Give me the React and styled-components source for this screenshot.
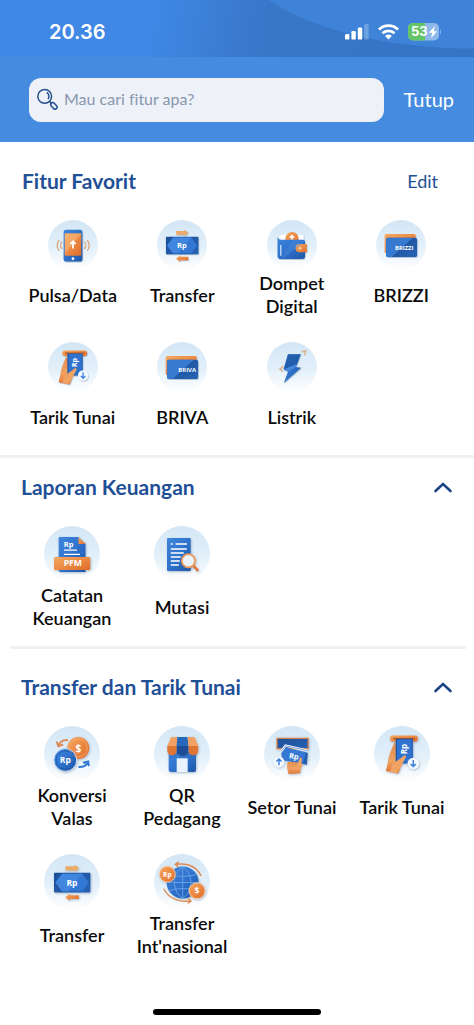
import React, { useState } from 'react';
import styled, { createGlobalStyle } from 'styled-components';

const GlobalStyle = createGlobalStyle`
  * {
    box-sizing: border-box;
  }

  body {
    margin: 0;
    background: #ffffff;
    font-family: 'Lato', 'Liberation Sans', sans-serif;
    font-variant-ligatures: none;
  }

  button {
    border: 0;
    padding: 0;
    background: none;
    font-family: inherit;
    cursor: pointer;
  }
`;

const Page = styled.div`
  display: flex;
  flex-direction: column;
  min-height: 100vh;
`;

const StatusBar = styled.div`
  display: flex;
  align-items: center;
  justify-content: space-between;
  height: 57px;
  padding: 6px 32px 0 49px;
  color: #ffffff;
  background:
    radial-gradient(240px 100px at 100% -51px, #3f83d8 99%, transparent 100%),
    linear-gradient(100deg, #3f88e5 32%, #3876c8 56%, #3574c5 100%);
`;

const Clock = styled.span`
  font-family: 'Inter', sans-serif;
  font-size: 20px;
  font-weight: 600;
  line-height: 24px;
`;

const StatusIcons = styled.div`
  display: flex;
  align-items: center;
  gap: 9px;
`;

const Header = styled.header`
  display: flex;
  align-items: center;
  gap: 20px;
  height: 85px;
  padding: 0 20px 0 29px;
  background: #458ce0;
`;

const SearchBox = styled.label`
  display: flex;
  flex: 1;
  align-items: center;
  gap: 6px;
  min-width: 0;
  height: 44px;
  padding: 0 8px 2px;
  border-radius: 12px;
  background: #eef1f7;
`;

const SearchInput = styled.input`
  flex: 1;
  min-width: 0;
  border: 0;
  padding: 0;
  outline: 0;
  background: transparent;
  color: #1c4587;
  font-family: inherit;
  font-size: 16px;
  font-variant-ligatures: none;
  line-height: 24px;

  &::placeholder {
    color: #8797ae;
    opacity: 1;
  }
`;

const CloseButton = styled.button`
  padding-bottom: 2px;
  color: #ffffff;
  font-size: 20px;
  line-height: 24px;
`;

const Section = styled.section`
  padding: ${(props) => props.$padding};
`;

const SectionHeader = styled.div`
  display: flex;
  align-items: center;
  justify-content: space-between;
  height: 26px;
  padding: 0 4px;
`;

const Title = styled.h2`
  margin: 0;
  color: #1f4f96;
  font-size: 21px;
  font-weight: 700;
  line-height: 26px;
`;

const EditButton = styled.button`
  padding-right: 14px;
  color: #1f4f96;
  font-size: 18px;
  line-height: 24px;
`;

const ToggleButton = styled.button`
  display: flex;
  padding: 4px 0;

  svg {
    transform: ${(props) => (props.$open ? 'none' : 'rotate(180deg)')};
  }
`;

const Grid = styled.div`
  display: grid;
  grid-template-columns: repeat(4, 1fr);
  row-gap: 24px;
  margin-top: 26px;
`;

const Feature = styled.a`
  display: flex;
  flex-direction: column;
  align-items: center;
  gap: 2px;
  color: #0a0a0a;
  text-decoration: none;
`;

const Label = styled.span`
  display: flex;
  align-items: center;
  justify-content: center;
  height: 46px;
  font-size: 18px;
  font-weight: 600;
  line-height: 23px;
  text-align: center;
  white-space: pre-line;
`;

const Divider = styled.hr`
  width: auto;
  height: 3px;
  margin: ${(props) => (props.$inset ? '0 8px 0 10px' : '0')};
  border: 0;
  background: #f1f1f3;
`;

const HomeIndicator = styled.div`
  width: 168px;
  height: 6px;
  margin: auto auto 10px;
  border-radius: 3px;
  background: #000000;
`;

const Defs = () => (
  <svg width="0" height="0" style={{ position: 'absolute' }} aria-hidden="true">
    <defs>
      <linearGradient id="sky" x1="0" y1="0" x2="0" y2="1">
        <stop offset="0" stopColor="#d3e6f5" />
        <stop offset="0.55" stopColor="#e3f0fa" />
        <stop offset="1" stopColor="#ffffff" />
      </linearGradient>
      <linearGradient id="blue" x1="0" y1="0" x2="1" y2="1">
        <stop offset="0" stopColor="#3f86dd" />
        <stop offset="0.5" stopColor="#2f72cc" />
        <stop offset="1" stopColor="#1f56a8" />
      </linearGradient>
      <linearGradient id="navy" x1="0" y1="0" x2="1" y2="1">
        <stop offset="0" stopColor="#1d4f98" />
        <stop offset="1" stopColor="#2762b4" />
      </linearGradient>
      <linearGradient id="orange" x1="0" y1="0" x2="1" y2="1">
        <stop offset="0" stopColor="#f4a862" />
        <stop offset="0.5" stopColor="#ec8a43" />
        <stop offset="1" stopColor="#df6b2c" />
      </linearGradient>
      <linearGradient id="skin" x1="0" y1="0" x2="0" y2="1">
        <stop offset="0" stopColor="#e08a4c" />
        <stop offset="0.6" stopColor="#f0a262" />
        <stop offset="1" stopColor="#dc7435" />
      </linearGradient>
      <filter id="soft" x="-20%" y="-20%" width="150%" height="150%">
        <feDropShadow dx="0.7" dy="0.9" stdDeviation="0.8" floodColor="#36567e" floodOpacity="0.4" />
      </filter>
    </defs>
  </svg>
);

const Mark = ({ x, y, size = 7, children, ...rest }) => (
  <text x={x} y={y} fontSize={size} fontFamily="Open Sans, sans-serif" fontWeight="700" fill="#fff" textAnchor="middle" {...rest}>
    {children}
  </text>
);

const Phone = () => (
  <>
    <g fill="none" stroke="#dba679" strokeWidth="1.5" strokeLinecap="round">
      <path d="M15.5 25a5 5 0 0 0 0 7M12.3 23a8.5 8.5 0 0 0 0 11M41 25a5 5 0 0 1 0 7M44.2 23a8.5 8.5 0 0 1 0 11" />
    </g>
    <g filter="url(#soft)">
      <rect x="17.5" y="11" width="21" height="35.5" rx="2.5" fill="url(#blue)" />
      <path d="M18.8 15h18.4v25H18.8z" fill="url(#orange)" />
    </g>
    <path d="M18.8 15h18.4L18.8 38z" fill="#f7bb80" opacity=".5" />
    <path d="M28 32v-7M25 27l3-3.2 3 3.2" fill="none" stroke="#fff" strokeWidth="2" />
    <circle cx="28" cy="43.3" r="1.5" fill="#fff" />
  </>
);

const Banknote = () => (
  <>
    <g filter="url(#soft)">
      <path d="M21.5 12.2h9.2v-1.4l4.6 3.5-4.6 3.5v-1.4h-9.2z" fill="#edab69" />
      <path d="M35 41.2h-9v-1.5l-4.7 3.5 4.7 3.5v-1.6h9z" fill="url(#orange)" />
      <rect x="10" y="18.7" width="36.4" height="19.7" rx=".8" fill="url(#navy)" />
    </g>
    <path d="M18 19.7h20.5l6.5 8.8-6.5 8.8H18l-6.7-8.8z" fill="#3277d3" />
    <path d="M18 19.7h20.5L24 37.3h-6l-6.7-8.8z" fill="#458ae2" opacity=".75" />
    <Mark x="28" y="31.5" size="8.5">Rp</Mark>
  </>
);

const Wallet = () => (
  <>
    <g filter="url(#soft)">
      <path d="M13 17.5l8-1.5 20 1v8H13z" fill="#fff" />
      <circle cx="28" cy="21" r="7.5" fill="url(#orange)" />
    </g>
    <path d="M28 23v-5M25.5 19.8l2.5-2.4 2.5 2.4" fill="none" stroke="#fff" strokeWidth="1.7" />
    <g filter="url(#soft)">
      <path d="M11.8 18.5q1 3.6 4 3.6H40q2.6 0 2.6 2.6V41q0 2.6-2.6 2.6H15q-3.2 0-3.2-3.2z" fill="url(#blue)" />
      <path d="M36.5 27h8v9h-8a4.5 4.5 0 0 1 0-9z" fill="url(#orange)" />
    </g>
    <path d="M15.5 28v12" stroke="#fff" strokeWidth="1.1" />
    <path d="M29 22.2h11q2.4 0 2.4 2.6L17 43.4h-1z" fill="#5b9cec" opacity=".28" />
    <circle cx="37" cy="31.5" r="1.7" fill="#f9c99b" />
  </>
);

const BankCard = ({ name }) => (
  <>
    <g filter="url(#soft)">
      <rect x="9.7" y="15.7" width="34.7" height="21.5" rx="2" fill="url(#orange)" />
      <rect x="11.2" y="20" width="34.8" height="21.4" rx="2" fill="url(#navy)" />
    </g>
    <path d="M13.2 20h28L17.5 41.4h-4.3q-2 0-2-2V22q0-2 2-2z" fill="#3d83dc" opacity=".8" />
    <Mark x={name === 'BRIZZI' ? 31.6 : 33.8} y="33.2" size="6.6">
      {name}
    </Mark>
  </>
);

const CashOut = () => (
  <>
    <g filter="url(#soft)">
      <rect x="16" y="9.5" width="27.8" height="6.2" rx="3" fill="url(#orange)" />
      <path d="M19 12.5h22" stroke="#ad5523" strokeWidth="1.4" />
      <path d="M20.5 16l-4.4 11q-2 5-2.2 9.5L11.8 45l12.4 2.6 3.2-8L34 30l-9-1z" fill="url(#skin)" />
      <path d="M21.7 12.8h17.2v21L35 37.4H21.7z" fill="url(#navy)" />
    </g>
    <path d="M23 13.5h14.7v20l-3.2 2.8H23z" fill="#2f73cf" />
    <Mark x="0" y="0" transform="translate(33 23) rotate(-90)" size="8">
      Rp
    </Mark>
    <path d="M18.4 38L28 31.2q1.6-2 3-2 1.5.5.6 2.6l-5.2 9.6-3.8 5.8-6.6-1.5z" fill="#f0a262" />
    <g filter="url(#soft)">
      <circle cx="39.3" cy="37.5" r="5.8" fill="#f3f8fe" />
    </g>
    <path d="M39.3 34v6.2M36.7 38l2.6 2.6 2.6-2.6" fill="none" stroke="#377fd9" strokeWidth="1.4" />
  </>
);

const CashIn = () => (
  <>
    <g filter="url(#soft)">
      <rect x="13" y="12.3" width="31.2" height="10.4" fill="url(#navy)" stroke="#df8445" strokeWidth="1.2" />
      <path d="M29 24l14.8 3-1 11.8-10-2z" fill="url(#navy)" />
      <path d="M23.5 36l-.5 5 1.5 7 11.5-.7 1-5.5 2-5.5-4-2z" fill="url(#skin)" />
      <path d="M18 24.2l3.5-4.5 22.2 5" fill="none" stroke="#fff" strokeWidth="2.4" />
      <path d="M18 24.2l3.5-4.5 22.2 5" fill="none" stroke="#3a76c5" strokeWidth=".7" />
      <path d="M21.6 21.5L42 26.2l-3 11.4-20.7-3.4-1-7z" fill="#3479d5" />
    </g>
    <Mark x="0" y="0" transform="translate(29.5 33) rotate(8)" size="7.6">
      Rp
    </Mark>
    <path d="M33.5 38l2.2-5.5q1.5-2.2 2.2.2l-.8 7.3-5 2z" fill="#f1a465" />
    <g filter="url(#soft)">
      <circle cx="15" cy="36" r="5.4" fill="#f3f8fe" />
    </g>
    <path d="M15 39.2v-6M12.4 35.5L15 33l2.6 2.5" fill="none" stroke="#377fd9" strokeWidth="1.4" />
  </>
);

const Bolt = () => (
  <>
    <path d="M38.5 11l4.8-1-1 5M18.3 27l-3.8 3.7 3.6 2.4" fill="none" stroke="#d9b28f" strokeWidth="1.8" />
    <g filter="url(#soft)">
      <path d="M23.5 13.7h14.2L32.5 28l5.7.7L18.8 46l4.8-13-5-2.2z" fill="url(#blue)" />
    </g>
    <path d="M23.5 13.7h14.2l-4 10.8L18.6 30.8z" fill="#1e559f" opacity=".75" />
    <path d="M18.6 30.8l15.2-6.4-1.3 3.6-8.9 5z" fill="#5a9bea" opacity=".55" />
  </>
);

const Report = () => (
  <>
    <g filter="url(#soft)">
      <path d="M16 11h18.5l7 7v28H16.5q-1.8 0-1.8-1.8V12.3Q14.7 11 16 11z" fill="url(#blue)" />
      <path d="M34.5 11l7 7h-7z" fill="url(#orange)" />
      <rect x="10" y="31" width="36.3" height="13" rx="1.2" fill="url(#orange)" />
    </g>
    <Mark x="24.6" y="20.8" size="7.4">Rp</Mark>
    <path d="M20 24.2h13M20 28.3h16" stroke="#fff" strokeWidth="1.3" />
    <Mark x="28.8" y="40.4" size="8.6">PFM</Mark>
  </>
);

const Mutation = () => (
  <>
    <g filter="url(#soft)">
      <rect x="13" y="12" width="23.7" height="33" rx="1" fill="url(#blue)" />
    </g>
    <path d="M16.8 18h2M21.5 18h11.5M16.8 23h16M16.8 27h13M16.8 31h10M16.8 35h9M16.8 39h8" stroke="#fff" strokeWidth="1.3" />
    <g filter="url(#soft)">
      <path d="M38.8 39.2l5.4 5.6" stroke="#df7438" strokeWidth="2.6" />
      <circle cx="34.4" cy="34.8" r="6.6" fill="#eaf3fd" stroke="#ec9a5b" strokeWidth="1.8" />
    </g>
  </>
);

const Exchange = () => (
  <>
    <path d="M24 14.2c-5-.5-7.5 1-9.2 4.6M12.7 15.5l1.7 4.8 4.8-1.8" fill="none" stroke="#dc8550" strokeWidth="1.9" />
    <path d="M34.5 41c5 .2 7.3-1 8.9-4M39 36.7l5.3-1.2.5 4.7" fill="none" stroke="#3378d1" strokeWidth="1.9" />
    <g filter="url(#soft)">
      <circle cx="34.3" cy="22" r="11" fill="url(#orange)" />
      <circle cx="21.3" cy="34" r="11.4" fill="url(#blue)" stroke="#e6f0fa" strokeWidth=".8" />
    </g>
    <circle cx="34.3" cy="22" r="9" fill="none" stroke="#f6b57b" strokeWidth=".7" />
    <circle cx="21.3" cy="34" r="9.2" fill="none" stroke="#1e57a8" strokeWidth=".8" />
    <Mark x="34.4" y="25.8" size="10">$</Mark>
    <Mark x="21.3" y="37" size="8.5">Rp</Mark>
  </>
);

const Shop = () => (
  <>
    <g filter="url(#soft)">
      <path d="M14.7 26H42v18q0 2-2 2H16.7q-2 0-2-2z" fill="url(#blue)" />
    </g>
    <path d="M22.7 32.3h11V46h-11z" fill="#e8f2fc" />
    <g filter="url(#soft)">
      <path d="M17.2 11h6.2l-.8 9h-9.3z" fill="#f0a163" />
      <path d="M23.4 11h10.2l.8 9H22.6z" fill="#2867ba" />
      <path d="M33.6 11h6.8l3.8 9h-9.8z" fill="#f0a163" />
      <path d="M13.3 20h9.4v5a4.7 4.2 0 0 1-9.4 0zM34.4 20h9.8v5a4.9 4.2 0 0 1-9.8 0z" fill="#df7435" />
      <path d="M22.7 20h11.7v5a5.8 5 0 0 1-11.7 0z" fill="#1d4e96" />
    </g>
  </>
);

const Globe = () => (
  <>
    <g filter="url(#soft)">
      <circle cx="28.7" cy="28.5" r="16" fill="url(#blue)" />
    </g>
    <path
      d="M28.7 12.5v32M12.7 28.5h32M15.5 20.5q13 4 26.4 0M15.5 36.5q13-4 26.4 0M28.7 12.5c-11 8-11 24 0 32M28.7 12.5c11 8 11 24 0 32"
      fill="none"
      stroke="#6aa5ea"
      strokeWidth=".9"
    />
    <path d="M47.2 22Q40.5 8 22 10.3M24.8 7.8l-3.6 2.6 3.2 2.7M9.7 34.8Q17 49 36.5 47M33.7 44.3l3.3 2.7-3.2 2.5" fill="none" stroke="#dc8b57" strokeWidth="1.4" />
    <g filter="url(#soft)" stroke="#f8d7b8" strokeWidth=".8">
      <circle cx="13.3" cy="20.2" r="8" fill="url(#orange)" />
      <circle cx="43" cy="36.8" r="8" fill="url(#orange)" />
    </g>
    <Mark x="13.3" y="22.6" size="6.5">Rp</Mark>
    <Mark x="43" y="39.8" size="8.5">$</Mark>
  </>
);

const icons = {
  phone: <Phone />,
  note: <Banknote />,
  wallet: <Wallet />,
  brizzi: <BankCard name="BRIZZI" />,
  briva: <BankCard name="BRIVA" />,
  cashOut: <CashOut />,
  cashIn: <CashIn />,
  bolt: <Bolt />,
  report: <Report />,
  mutation: <Mutation />,
  exchange: <Exchange />,
  shop: <Shop />,
  globe: <Globe />,
};

const favorites = [
  { icon: 'phone', label: 'Pulsa/Data' },
  { icon: 'note', label: 'Transfer' },
  { icon: 'wallet', label: 'Dompet\nDigital' },
  { icon: 'brizzi', label: 'BRIZZI' },
  { icon: 'cashOut', label: 'Tarik Tunai' },
  { icon: 'briva', label: 'BRIVA' },
  { icon: 'bolt', label: 'Listrik' },
];

const reports = [
  { icon: 'report', label: 'Catatan\nKeuangan' },
  { icon: 'mutation', label: 'Mutasi' },
];

const transfers = [
  { icon: 'exchange', label: 'Konversi\nValas' },
  { icon: 'shop', label: 'QR\nPedagang' },
  { icon: 'cashIn', label: 'Setor Tunai' },
  { icon: 'cashOut', label: 'Tarik Tunai' },
  { icon: 'note', label: 'Transfer' },
  { icon: 'globe', label: "Transfer\nInt'nasional" },
];

const FeatureGrid = ({ items, size = 56 }) => (
  <Grid>
    {items.map((item) => (
      <Feature href="#" key={item.label}>
        <svg width={size} height={size} viewBox="0 0 56 56" aria-hidden="true">
          <circle cx="28" cy="28" r="28" fill="url(#sky)" />
          {icons[item.icon]}
        </svg>
        <Label>{item.label}</Label>
      </Feature>
    ))}
  </Grid>
);

const Collapsible = ({ title, items, padding }) => {
  const [open, setOpen] = useState(true);

  return (
    <Section $padding={padding}>
      <SectionHeader>
        <Title>{title}</Title>
        <ToggleButton $open={open} aria-label={title} aria-expanded={open} onClick={() => setOpen(!open)}>
          <svg width="20" height="14" viewBox="0 0 20 14">
            <path d="M2.5 11L10 4l7.5 7" fill="none" stroke="#1c4587" strokeWidth="2.6" strokeLinecap="round" />
          </svg>
        </ToggleButton>
      </SectionHeader>
      {open && <FeatureGrid items={items} />}
    </Section>
  );
};

const App = () => {
  const [query, setQuery] = useState('');

  return (
    <Page>
      <GlobalStyle />
      <Defs />
      <StatusBar>
        <Clock>20.36</Clock>
        <StatusIcons>
          <svg width="24" height="16" viewBox="0 0 24 16" fill="#fff">
            <rect x="0" y="10" width="4.4" height="5.6" rx="1.2" />
            <rect x="6.4" y="7" width="4.4" height="8.6" rx="1.2" />
            <rect x="12.8" y="3.5" width="4.4" height="12.1" rx="1.2" />
            <rect x="19.2" y="0" width="4.4" height="15.6" rx="1.2" opacity=".25" />
          </svg>
          <svg width="21" height="16" viewBox="0 0 21 16" fill="none" stroke="#fff" strokeWidth="2.8">
            <path d="M1 5.4a13.6 13.6 0 0 1 19 0M4.5 9.3a8.6 8.6 0 0 1 12 0" />
            <path d="M10.5 15.4l-3.4-3.5a4.9 4.9 0 0 1 6.8 0z" fill="#fff" stroke="none" />
          </svg>
          <svg width="34" height="18" viewBox="0 0 34 18">
            <rect x="0" y="0" width="31" height="17.5" rx="5" fill="#8fb8ea" />
            <path d="M5 0h12v17.5H5a5 5 0 0 1-5-5V5a5 5 0 0 1 5-5z" fill="#65c466" />
            <path d="M32 6q2 2.7 0 5.4z" fill="#8fb8ea" />
            <text x="3" y="13.4" fontFamily="Inter, sans-serif" fontSize="13" fontWeight="700" fill="#fff">
              53
            </text>
            <path d="M27 3l-6.2 6.8h3.5L23 15l6.2-6.8h-3.5z" fill="#fff" />
          </svg>
        </StatusIcons>
      </StatusBar>
      <Header>
        <SearchBox>
          <svg width="21" height="22" viewBox="0 0 21 22" fill="none" stroke="#24508f" strokeWidth="1.5">
            <circle cx="7.7" cy="8.3" r="6.9" />
            <path d="M9.8 4.5a4.4 4.4 0 0 1 1.1 6.6M12.6 13.4l2 2" />
            <rect x="-3.7" y="-2" width="7.4" height="4" rx="2" transform="translate(16.9 17.9) rotate(48)" />
          </svg>
          <SearchInput
            type="text"
            aria-label="Mau cari fitur apa?"
            placeholder="Mau cari fitur apa?"
            value={query}
            onChange={(e) => setQuery(e.target.value)}
          />
        </SearchBox>
        <CloseButton>Tutup</CloseButton>
      </Header>
      <Section $padding="26px 18px 15px">
        <SectionHeader>
          <Title>Fitur Favorit</Title>
          <EditButton>Edit</EditButton>
        </SectionHeader>
        <FeatureGrid items={favorites} size={50} />
      </Section>
      <Divider />
      <Collapsible title="Laporan Keuangan" items={reports} padding="16px 17px 16px" />
      <Divider $inset />
      <Collapsible title="Transfer dan Tarik Tunai" items={transfers} padding="25px 17px 20px" />
      <HomeIndicator />
    </Page>
  );
};

export default App;
